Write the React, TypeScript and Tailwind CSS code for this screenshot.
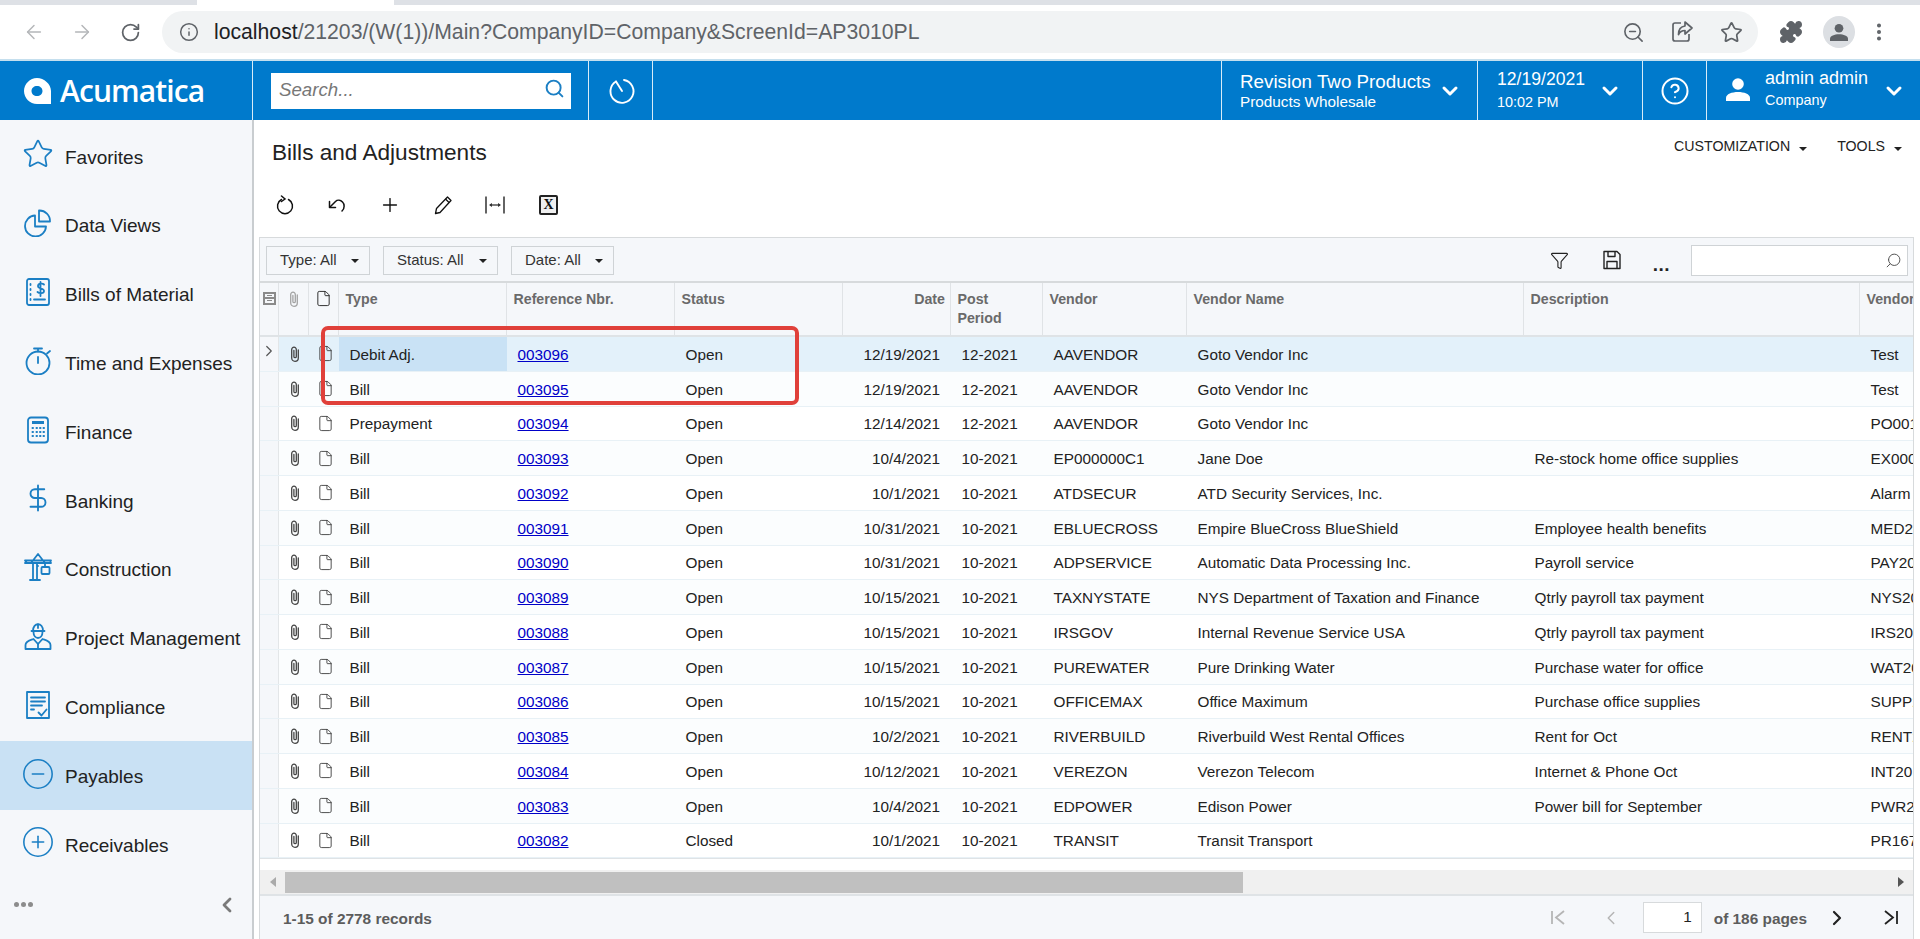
import React from "react";
import { ArrowLeft, ArrowRight, RotateCw, Info, ZoomOut, Star, Puzzle, MoreVertical, ChevronDown, CircleHelp, Search, ChevronLeft, ChevronRight, DollarSign, CircleMinus, CirclePlus, Plus, Funnel, File } from "lucide-react";

const rows = [
  ["Debit Adj.", "003096", "Open", "12/19/2021", "12-2021", "AAVENDOR", "Goto Vendor Inc", "", "Test"],
  ["Bill", "003095", "Open", "12/19/2021", "12-2021", "AAVENDOR", "Goto Vendor Inc", "", "Test"],
  ["Prepayment", "003094", "Open", "12/14/2021", "12-2021", "AAVENDOR", "Goto Vendor Inc", "", "PO001"],
  ["Bill", "003093", "Open", "10/4/2021", "10-2021", "EP000000C1", "Jane Doe", "Re-stock home office supplies", "EX000"],
  ["Bill", "003092", "Open", "10/1/2021", "10-2021", "ATDSECUR", "ATD Security Services, Inc.", "", "Alarm"],
  ["Bill", "003091", "Open", "10/31/2021", "10-2021", "EBLUECROSS", "Empire BlueCross BlueShield", "Employee health benefits", "MED20"],
  ["Bill", "003090", "Open", "10/31/2021", "10-2021", "ADPSERVICE", "Automatic Data Processing Inc.", "Payroll service", "PAY20"],
  ["Bill", "003089", "Open", "10/15/2021", "10-2021", "TAXNYSTATE", "NYS Department of Taxation and Finance", "Qtrly payroll tax payment", "NYS20"],
  ["Bill", "003088", "Open", "10/15/2021", "10-2021", "IRSGOV", "Internal Revenue Service USA", "Qtrly payroll tax payment", "IRS20"],
  ["Bill", "003087", "Open", "10/15/2021", "10-2021", "PUREWATER", "Pure Drinking Water", "Purchase water for office", "WAT20"],
  ["Bill", "003086", "Open", "10/15/2021", "10-2021", "OFFICEMAX", "Office Maximum", "Purchase office supplies", "SUPP2"],
  ["Bill", "003085", "Open", "10/2/2021", "10-2021", "RIVERBUILD", "Riverbuild West Rental Offices", "Rent for Oct", "RENT2"],
  ["Bill", "003084", "Open", "10/12/2021", "10-2021", "VEREZON", "Verezon Telecom", "Internet & Phone Oct", "INT20"],
  ["Bill", "003083", "Open", "10/4/2021", "10-2021", "EDPOWER", "Edison Power", "Power bill for September", "PWR20"],
  ["Bill", "003082", "Closed", "10/1/2021", "10-2021", "TRANSIT", "Transit Transport", "", "PR167"],
];

const Ic = ({ children, s = 28 }: { children: React.ReactNode; s?: number }) => (
  <svg width={s} height={s} viewBox="0 0 28 28" fill="none" stroke="#1b7fc4" strokeWidth="1.8" strokeLinecap="round" strokeLinejoin="round">{children}</svg>
);

const PieIcon = () => (
  <Ic><path d="M11 6.500a10.500 10.500 0 1 0 11 11H11z" /><path d="M15 1.500a10.500 10.500 0 0 1 11 11H15z" /></Ic>
);
const BillIcon = () => (
  <Ic><rect x="3" y="1" width="22" height="26" rx="2" /><path d="M6.500 6v1M6.500 11v1M6.500 16v1M6.500 21v1" /><path d="M10 21.500h11" /><path d="M20 6.500c-1-1-6-1.500-6 1.500 0 3.500 6 1.500 6 5 0 3-5 2.500-6.500 1M16.500 4v14" /></Ic>
);
const TimerIcon = () => (
  <Ic><circle cx="14" cy="16" r="11.500" /><path d="M10 1.500h8M14 1.500v3M14 10v6M23 6.500l3-2.500" /></Ic>
);
const CalcIcon = () => (
  <Ic><rect x="4" y="1.500" width="20" height="25" rx="3" /><path d="M8 6.500h12" strokeWidth="3" strokeLinecap="butt" /><path d="M8.500 12h.5M12.500 12h.5M16 12h.5M19.500 12h.5M8.500 16h.5M12.500 16h.5M16 16h.5M19.500 16h.5M8.500 20h.5M12.500 20h.5M16 20h.5M19.500 20h.5" strokeWidth="2" /></Ic>
);
const CraneIcon = () => (
  <Ic><path d="M1 7.500h26M1 10h26M1 10l2-2.500M27 10l-1-2.500M7 10 14 1l7 9" /><path d="M9 10v17M13 10v17M6 27h10M13 13h1" /><rect x="17.500" y="14" width="8" height="7" rx="1" /><path d="M21 10v4" /></Ic>
);
const WorkerIcon = () => (
  <Ic><path d="M7.500 9h13M9 9c0-9 10-9 10 0M14 2v4" /><path d="M9.500 10c0 8 9 8 9 0" /><path d="M1.500 27v-4c0-4 5-5 8-6l4.500 5 4.500-5c3 1 8 2 8 6v4z" /><path d="M14 22v5" /></Ic>
);
const CompIcon = () => (
  <Ic><path d="M3 1h22v26H3z" /><path d="M7 6.500h14M7 10.500h14M7 14.500h11M7 18.500h3" /><path d="m14.500 21.500 3 3 5-6" /></Ic>
);

const PersonIcon = ({ s, color }: { s: number; color: string }) => (
  <svg width={s} height={s} viewBox="0 0 24 24" fill={color}><circle cx="12" cy="7" r="5.800" /><path d="M0 24v-3c0-4 6-6 12-6s12 2 12 6v3z" /></svg>
);
const Clip = ({ color }: { color: string }) => (
  <svg width="10" height="16" viewBox="0 0 9 16" fill="none" stroke={color} strokeWidth="1.300" strokeLinecap="round"><path d="M7.800 4v8a3.300 3.300 0 0 1-6.600 0V3.500a2.300 2.300 0 0 1 4.600 0V10.500a1.200 1.200 0 0 1-2.400 0V4.500" /></svg>
);

const nav: [string, React.ReactNode][] = [
  ["Favorites", <Star size={32} strokeWidth={1.3} color="#1b7fc4" />],
  ["Data Views", <PieIcon />],
  ["Bills of Material", <BillIcon />],
  ["Time and Expenses", <TimerIcon />],
  ["Finance", <CalcIcon />],
  ["Banking", <DollarSign size={30} strokeWidth={1.5} color="#1b7fc4" />],
  ["Construction", <CraneIcon />],
  ["Project Management", <WorkerIcon />],
  ["Compliance", <CompIcon />],
  ["Payables", <CircleMinus size={34} strokeWidth={1.1} color="#1b7fc4" />],
  ["Receivables", <CirclePlus size={34} strokeWidth={1.1} color="#1b7fc4" />],
];

const Caret = () => (
  <span className="inline-block h-0 w-0 border-x-[4px] border-t-[4px] border-x-transparent border-t-[#222]" />
);

const Filter = ({ label, w }: { label: string; w: string }) => (
  <div className={`flex h-[29px] items-center justify-between border border-[#cfd3d6] pl-[13px] pr-[10px] text-[15px] text-[#333] ${w}`}>
    <span>{label}</span>
    <Caret />
  </div>
);

const Head = ({ w, children, right }: { w: string; children?: React.ReactNode; right?: boolean }) => (
  <div className={`h-full shrink-0 border-r border-[#e0e3e6] pt-[7px] text-[14.2px] font-bold leading-[19px] text-[#6a6a6a] ${w} ${right ? "pr-[5px] text-right" : "pl-[6.5px]"}`}>{children}</div>
);

const Cell = ({ w, children, right, active }: { w: string; children?: React.ReactNode; right?: boolean; active?: boolean }) => (
  <div className={`flex h-full shrink-0 items-center overflow-hidden whitespace-nowrap pt-[3px] ${w} ${right ? "justify-end pr-[11px]" : "pl-[10.5px]"} ${active ? "bg-[#c9e2f5]" : ""}`}>{children}</div>
);

export default function App() {
  return (
    <div className="flex h-[939px] w-[1920px] flex-col overflow-hidden bg-white font-['Liberation_Sans',sans-serif] text-[#222]">
      {/* browser chrome */}
      <div className="flex h-[5px] shrink-0 bg-[#dee1e6]">
        <div className="ml-[197px] h-full w-[197px] bg-white" />
      </div>
      <div className="flex h-[54px] shrink-0 items-center bg-white">
        <div className="flex w-[162px] items-center pl-[23px] text-[#5f6368]">
          <ArrowLeft size={22} strokeWidth={1.6} color="#b4b6b9" />
          <ArrowRight size={22} strokeWidth={1.6} color="#b4b6b9" className="ml-[26px]" />
          <RotateCw size={21} strokeWidth={2} color="#5f6368" className="ml-[27px]" />
        </div>
        <div className="flex h-[42px] w-[1596px] items-center rounded-full bg-[#f1f3f4] pl-[17px] pr-[15px]">
          <Info size={20} strokeWidth={1.8} color="#5f6368" />
          <span className="ml-[15px] text-[21.2px] text-[#5f6368]"><span className="text-[#202124]">localhost</span>/21203/(W(1))/Main?CompanyID=Company&amp;ScreenId=AP3010PL</span>
          <div className="ml-auto flex items-center gap-[26px]">
            <ZoomOut size={23} strokeWidth={1.7} color="#5f6368" />
            <svg width="23" height="24" viewBox="0 0 23 24" fill="none" stroke="#5f6368" strokeWidth="1.700" strokeLinejoin="round"><path d="M10 3H4a2 2 0 0 0-2 2v14a2 2 0 0 0 2 2h12a2 2 0 0 0 2-2v-5" /><path d="M14 2l7 6-7 6v-3.500c-3 0-5 1-6.500 4 0-5 2-8 6.500-8.500z" /></svg>
            <Star size={23} strokeWidth={1.8} color="#5f6368" />
          </div>
        </div>
        <div className="flex flex-1 items-center pl-[21px]">
          <Puzzle size={24} fill="#5f6368" color="#5f6368" />
          <div className="ml-[20px] flex h-[32px] w-[32px] items-center justify-center rounded-full bg-[#dcdfe3]">
            <PersonIcon s={18} color="#5f6368" />
          </div>
          <MoreVertical size={22} strokeWidth={2.4} color="#5f6368" className="ml-[13px]" />
        </div>
      </div>
      <div className="h-[2px] shrink-0 bg-[#c5dfee]" />

      {/* app header */}
      <div className="flex h-[59px] shrink-0 bg-[#007acc] text-white">
        <div className="flex w-[253px] shrink-0 items-center border-r border-[#d9ecf8] pl-[24px]">
          <svg width="27" height="26" viewBox="0 0 27 26"><path fillRule="evenodd" fill="#fff" d="M13 0C6 0 0 6 0 13s6 13 13 13h14V13C27 6 20 0 13 0zm0 8c3 0 5.500 2 5.500 5s-2.500 5-5.500 5-5.500-2-5.500-5 2.500-5 5.500-5z" /></svg>
          <span className="ml-[9px] font-['Open_Sans',sans-serif] text-[30px] font-semibold leading-none tracking-[-0.9px]">Acumatica</span>
        </div>
        <div className="flex w-[336px] shrink-0 items-center border-r border-[#d9ecf8] pl-[18px]">
          <div className="flex h-[36px] w-[300px] items-center justify-between bg-white pl-[8px] pr-[6px]">
            <span className="text-[18.7px] italic text-[#777]">Search...</span>
            <Search size={21} strokeWidth={2.2} color="#1b7fc4" className="mb-[4px]" />
          </div>
        </div>
        <div className="flex w-[64px] shrink-0 items-center justify-center border-r border-[#d9ecf8]">
          <svg width="28" height="28" viewBox="0 0 28 28" fill="none" stroke="#fff" strokeWidth="1.900" strokeLinecap="round"><path d="M9 4.500A11.500 11.500 0 1 0 17 3" /><path d="M9 4.500 15 14" /></svg>
        </div>
        <div className="flex-1" />
        <div className="flex w-[257px] shrink-0 items-center border-x border-[#d9ecf8] pl-[18px]">
          <div>
            <div className="text-[18.8px] leading-[22px]">Revision Two Products</div>
            <div className="text-[15.3px] leading-[18px]">Products Wholesale</div>
          </div>
          <ChevronDown size={24} strokeWidth={3} className="ml-[7px]" />
        </div>
        <div className="flex w-[165px] shrink-0 items-center border-r border-[#d9ecf8] pl-[19px]">
          <div className="w-[88px] pb-[3px]">
            <div className="text-[17.6px] leading-[25px]">12/19/2021</div>
            <div className="text-[14.4px] leading-[20px]">10:02 PM</div>
          </div>
          <ChevronDown size={24} strokeWidth={3} className="ml-[13px]" />
        </div>
        <div className="flex w-[64px] shrink-0 items-center justify-center border-r border-[#d9ecf8]">
          <CircleHelp size={30} strokeWidth={1.6} />
        </div>
        <div className="flex w-[213px] shrink-0 items-center">
          <div className="ml-[18px] flex w-[26px] justify-center pb-[3px]"><PersonIcon s={24} color="#fff" /></div>
          <div className="ml-[14px] w-[117px] pb-[4px]">
            <div className="text-[18px] leading-[24px]">admin admin</div>
            <div className="text-[14.4px] leading-[21px]">Company</div>
          </div>
          <ChevronDown size={24} strokeWidth={3} />
        </div>
      </div>

      <div className="flex min-h-0 flex-1">
        {/* sidebar */}
        <div className="flex w-[254px] shrink-0 flex-col border-r-[2px] border-[#c9cdd0] bg-[#f5f7fa]">
          <div className="pt-[2px]">
            {nav.map(([label, icon]) => (
              <div key={label} className={`flex h-[68.8px] items-center ${label === "Payables" ? "bg-[#c9e1f4]" : ""}`}>
                <div className="flex w-[65px] shrink-0 items-center justify-center pl-[10px] pb-[4px]">{icon}</div>
                <span className="pt-[3px] text-[19px] text-[#222]">{label}</span>
              </div>
            ))}
          </div>
          <div className="mt-auto flex h-[64px] items-center justify-between pl-[14px] pr-[13px] pb-[8px]">
            <div className="flex gap-[2px]">
              <span className="h-[5px] w-[5px] rounded-full bg-[#8c8c8c]" />
              <span className="h-[5px] w-[5px] rounded-full bg-[#8c8c8c]" />
              <span className="h-[5px] w-[5px] rounded-full bg-[#8c8c8c]" />
            </div>
            <ChevronLeft size={24} strokeWidth={2.8} color="#7a7a7a" />
          </div>
        </div>

        {/* main */}
        <div className="relative flex min-w-0 flex-1 flex-col bg-white">
          <div className="flex h-[55px] shrink-0 items-center justify-between pl-[18px] pr-[18px]">
            <span className="mt-[10px] text-[22.6px] text-[#222]">Bills and Adjustments</span>
            <div className="mb-[2px] flex items-center text-[14.2px] text-[#222]">
              <span>CUSTOMIZATION</span>
              <span className="ml-[9px] mr-[30px]"><Caret /></span>
              <span>TOOLS</span>
              <span className="ml-[9px]"><Caret /></span>
            </div>
          </div>
          <div className="flex h-[62px] shrink-0 items-center gap-[32px] pl-[21px] pb-[2px]">
            <svg width="20" height="20" viewBox="0 0 20 20" fill="none" stroke="#111" strokeWidth="1.500" strokeLinecap="round"><path d="M6.500 4.500a7.500 7.500 0 1 0 7 0" /><path d="M6.500 1l3.500 3-3.500 2.500" /></svg>
            <svg width="20" height="20" viewBox="0 0 20 20" fill="none" stroke="#111" strokeWidth="1.500" strokeLinecap="round" strokeLinejoin="round"><path d="M15 16c3-3 2.500-7 .5-9-2-2-5-2.500-7-.5L3 12" /><path d="M2.500 6.500V12.500H8.500" /></svg>
            <Plus size={22} strokeWidth={1.5} color="#111" />
            <svg width="20" height="20" viewBox="0 0 20 20" fill="none" stroke="#111" strokeWidth="1.300" strokeLinejoin="round"><path d="M14.500 2 18 5.500 7 17.500 2.500 18.500 3.500 13.500z" /><path d="M12.500 4l3.500 3.500" /></svg>
            <svg width="20" height="20" viewBox="0 0 20 20" fill="none" stroke="#111" strokeWidth="1.300"><path d="M1 1.500v17M19 1.500v17" /><path d="M5 10h10" stroke="#333" /><path d="M4 10l3-2v4zM16 10l-3-2v4z" fill="#333" stroke="none" /></svg>
            <span className="ml-[2px] flex h-[20px] w-[19px] items-center justify-center rounded-[2px] border-[2px] border-[#222] bg-[#f0f0f0] font-['Liberation_Serif',serif] text-[14px] font-bold leading-none text-[#111]">X</span>
          </div>

          {/* grid */}
          <div className="ml-[5px] mr-[6px] flex min-h-0 flex-1 flex-col overflow-hidden border-x border-t border-[#d7dadc] text-[15.3px] text-[#222]">
            <div className="flex h-[45px] shrink-0 items-center border-b-[2px] border-[#d7dadc] bg-[#f5f7fa] pl-[6px] pr-[5px] pt-[2px]">
              <div className="flex gap-[13px]">
                <Filter label="Type: All" w="w-[104px]" />
                <Filter label="Status: All" w="w-[115px]" />
                <Filter label="Date: All" w="w-[103px]" />
              </div>
              <div className="ml-auto flex items-center">
                <Funnel size={19} strokeWidth={1.4} color="#222" />
                <svg width="20" height="20" viewBox="0 0 20 20" fill="none" stroke="#222" strokeWidth="1.400" strokeLinejoin="round" className="ml-[33px] mb-[2px]"><path d="M2 1.500h13l3 3v14H2z" /><path d="M6 1.500v5h7v-5M5 18.500v-7h10v7" /></svg>
                <span className="ml-[31px] mt-[8px] text-[19px] font-bold leading-none tracking-[0.5px] text-[#222]">...</span>
                <div className="ml-[21px] flex h-[31px] w-[217px] items-center justify-end border border-[#cfd3d6] bg-white pr-[5px]">
                  <Search size={17} strokeWidth={1.4} color="#555" className="-scale-x-100" />
                </div>
              </div>
            </div>

            <div className="flex h-[54px] shrink-0 border-b-[2px] border-[#dfe3e6] bg-[#f5f7fa]">
              <div className="flex h-full w-[19px] shrink-0 justify-center border-r border-[#e0e3e6] pt-[8px]">
                <svg width="13" height="15" viewBox="0 0 13 15" fill="#8a8a8a"><path fillRule="evenodd" d="M0 1h13v13H0zm2 2v3h9V3zm0 5v4h9V8zm2-4h5v1H4zm0 5h5v1H4z" /></svg>
              </div>
              <div className="flex h-full w-[30px] shrink-0 justify-center border-r border-[#e0e3e6] pt-[8px]">
                <Clip color="#a3a3a3" />
              </div>
              <div className="flex h-full w-[30px] shrink-0 justify-center border-r border-[#e0e3e6] pt-[7px]">
                <File size={17} strokeWidth={1.3} color="#222" />
              </div>
              <Head w="w-[168px]">Type</Head>
              <Head w="w-[168px]">Reference Nbr.</Head>
              <Head w="w-[168px]">Status</Head>
              <Head w="w-[108px]" right>Date</Head>
              <Head w="w-[92px]">Post<br />Period</Head>
              <Head w="w-[144px]">Vendor</Head>
              <Head w="w-[337px]">Vendor Name</Head>
              <Head w="w-[336px]">Description</Head>
              <Head w="w-[60px]">Vendor</Head>
            </div>

            <div className="shrink-0">
              {rows.map((r, i) => (
                <div key={r[1]} className={`flex h-[34.76px] border-b border-[#e8f1f6] ${i === 0 ? "bg-[#e3f1fa]" : i % 2 === 0 ? "bg-white" : "bg-[#fbfdfe]"}`}>
                  <div className="flex h-full w-[19px] shrink-0 items-center justify-center border-r border-[#e3e6e8] bg-[#f5f7fa]">
                    {i === 0 && <ChevronRight size={18} strokeWidth={1.6} color="#555" className="mb-[5px]" />}
                  </div>
                  <div className="flex h-full w-[30px] shrink-0 items-center justify-center pl-[1px]">
                    <Clip color="#444" />
                  </div>
                  <div className="flex h-full w-[30px] shrink-0 items-center justify-center pl-[3px]">
                    <File size={17} strokeWidth={1.2} color="#333" />
                  </div>
                  <Cell w="w-[168px]" active={i === 0}>{r[0]}</Cell>
                  <Cell w="w-[168px]"><a className="text-[#0000c8] underline" href="#">{r[1]}</a></Cell>
                  <Cell w="w-[168px]">{r[2]}</Cell>
                  <Cell w="w-[108px]" right>{r[3]}</Cell>
                  <Cell w="w-[92px]">{r[4]}</Cell>
                  <Cell w="w-[144px]">{r[5]}</Cell>
                  <Cell w="w-[337px]">{r[6]}</Cell>
                  <Cell w="w-[336px]">{r[7]}</Cell>
                  <Cell w="w-[60px]">{r[8]}</Cell>
                </div>
              ))}
            </div>

            <div className="h-[12px] shrink-0 border-t border-[#dfe3e6] bg-white" />
            <div className="flex h-[26px] shrink-0 items-center border-b-[2px] border-[#dfe3e6] bg-[#f0f0f0]">
              <div className="flex w-[25px] shrink-0 justify-center">
                <span className="h-0 w-0 border-y-[5px] border-r-[6px] border-y-transparent border-r-[#aaa]" />
              </div>
              <div className="h-[21px] w-[958px] bg-[#c0c0c0]" />
              <div className="flex flex-1 justify-end pr-[9px]">
                <span className="h-0 w-0 border-y-[5px] border-l-[6px] border-y-transparent border-l-[#555]" />
              </div>
            </div>
            <div className="flex min-h-0 flex-1 items-center bg-[#f5f7fa] pl-[23px] pr-[14.5px] text-[15.4px] font-bold text-[#5c5c5c]">
              <span className="pt-[2px]">1-15 of 2778 records</span>
              <div className="ml-auto flex items-center">
                <svg width="17" height="17" viewBox="0 0 17 17" fill="none" stroke="#b5b5b5" strokeWidth="1.800"><path d="M2 2v13M14 2 6 8.500l8 6.500" /></svg>
                <ChevronLeft size={22} strokeWidth={1.6} color="#b5b5b5" className="ml-[33px]" />
                <div className="ml-[20.7px] flex h-[31px] w-[59px] items-center justify-end border border-[#d7dadc] bg-white pr-[9px] text-[15.3px] font-normal text-[#222]">1</div>
                <span className="ml-[12px] pt-[1px]">of 186 pages</span>
                <ChevronRight size={24} strokeWidth={2.2} color="#222" className="ml-[18px]" />
                <svg width="17" height="17" viewBox="0 0 17 17" fill="none" stroke="#222" strokeWidth="1.800" className="ml-[32.5px]"><path d="M15 2v13M3 2l8 6.500L3 15" /></svg>
              </div>
            </div>
          </div>

          {/* annotation */}
          <div className="absolute left-[67px] top-[206px] h-[79px] w-[478px] rounded-[7px] border-[4px] border-[#e0403a]" />
        </div>
      </div>
    </div>
  );
}
